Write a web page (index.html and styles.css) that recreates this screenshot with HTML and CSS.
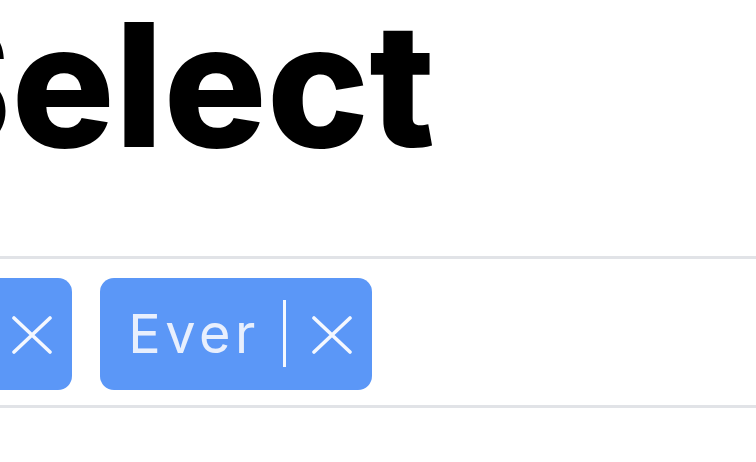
FILE: index.html
```html
<!DOCTYPE html>
<html>
<head>
<meta charset="utf-8">
<link rel="stylesheet" href="styles.css">
</head>
<body>
<main class="page">
  <h1 class="title">Select</h1>
  <div class="field">
    <div class="chips">
      <span class="chip chip-first"><span class="chip-label">Never</span><span class="chip-sep"></span><svg class="chip-x" viewBox="0 0 40 38" width="40" height="38"><path d="M2 2 L38 36 M38 2 L2 36" stroke="#f4f8ff" stroke-width="3.6" stroke-linecap="round" fill="none"/></svg></span>
      <span class="chip"><span class="chip-label">Ever</span><span class="chip-sep"></span><svg class="chip-x" viewBox="0 0 40 38" width="40" height="38"><path d="M2 2 L38 36 M38 2 L2 36" stroke="#f4f8ff" stroke-width="3.6" stroke-linecap="round" fill="none"/></svg></span>
    </div>
  </div>
</main>
</body>
</html>
```
FILE: styles.css
```css
html, body {
  margin: 0;
  padding: 0;
  background: #ffffff;
  overflow: hidden;
}
.page {
  width: 756px;
  height: 462px;
  overflow: hidden;
  font-family: Inter, "Liberation Sans", sans-serif;
}
.title {
  margin: -2px 0 0 -102px;
  padding-top: 0;
  font-size: 172px;
  line-height: 172px;
  font-weight: 800;
  color: #000;
  letter-spacing: 0px;
  white-space: nowrap;
}
.field {
  margin-top: 86px;
  margin-left: -40px;
  margin-right: -40px;
  border-top: 3px solid #e1e3e7;
  border-bottom: 3px solid #e1e3e7;
  height: 146px;
  display: flex;
  align-items: center;
}
.chips {
  display: flex;
  gap: 28px;
  margin-left: -203px;
  margin-top: 3px;
}
.chip {
  display: flex;
  align-items: center;
  height: 112px;
  padding: 0 20px 0 28px;
  border-radius: 14px;
  background: #5b97f7;
  color: #e8effd;
}
.chip-label {
  font-size: 54px;
  font-weight: 400;
  letter-spacing: 4.5px;
  margin-right: -4.5px;
}
.chip-sep {
  width: 3px;
  height: 67px;
  margin: 0 26px 0 28px;
  background: #f4f8ff;
}
.chip-x {
  display: block;
  margin-top: 2px;
}
```
